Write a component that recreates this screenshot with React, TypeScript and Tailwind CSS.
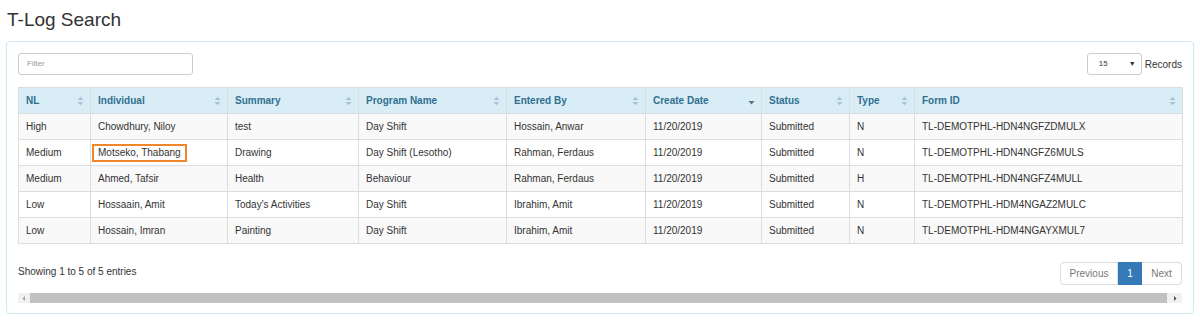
import { FC } from "react";

type Row = {
  nl: string;
  individual: string;
  summary: string;
  program: string;
  enteredBy: string;
  createDate: string;
  status: string;
  type: string;
  formId: string;
  flagged?: boolean;
};

const rows: Row[] = [
  { nl: "High", individual: "Chowdhury, Niloy", summary: "test", program: "Day Shift", enteredBy: "Hossain, Anwar", createDate: "11/20/2019", status: "Submitted", type: "N", formId: "TL-DEMOTPHL-HDN4NGFZDMULX" },
  { nl: "Medium", individual: "Motseko, Thabang", summary: "Drawing", program: "Day Shift (Lesotho)", enteredBy: "Rahman, Ferdaus", createDate: "11/20/2019", status: "Submitted", type: "N", formId: "TL-DEMOTPHL-HDN4NGFZ6MULS", flagged: true },
  { nl: "Medium", individual: "Ahmed, Tafsir", summary: "Health", program: "Behaviour", enteredBy: "Rahman, Ferdaus", createDate: "11/20/2019", status: "Submitted", type: "H", formId: "TL-DEMOTPHL-HDN4NGFZ4MULL" },
  { nl: "Low", individual: "Hossaain, Amit", summary: "Today's Activities", program: "Day Shift", enteredBy: "Ibrahim, Amit", createDate: "11/20/2019", status: "Submitted", type: "N", formId: "TL-DEMOTPHL-HDM4NGAZ2MULC" },
  { nl: "Low", individual: "Hossain, Imran", summary: "Painting", program: "Day Shift", enteredBy: "Ibrahim, Amit", createDate: "11/20/2019", status: "Submitted", type: "N", formId: "TL-DEMOTPHL-HDM4NGAYXMUL7" },
];

const columns = [
  { label: "NL", width: "w-[72px]" },
  { label: "Individual", width: "w-[137px]" },
  { label: "Summary", width: "w-[131px]" },
  { label: "Program Name", width: "w-[148px]" },
  { label: "Entered By", width: "w-[139px]" },
  { label: "Create Date", width: "w-[116px]", sorted: true },
  { label: "Status", width: "w-[88px]" },
  { label: "Type", width: "w-[65px]" },
  { label: "Form ID", width: "w-[268px]" },
];

const SortIcon: FC<{ sorted?: boolean }> = ({ sorted }) =>
  sorted ? (
    <svg width="7" height="10" viewBox="0 0 7 10">
      <path d="M0.5 5 L6.5 5 L3.5 8.5 Z" fill="#4f7590" />
    </svg>
  ) : (
    <svg width="7" height="10" viewBox="0 0 7 10">
      <path d="M0.5 4 L6.5 4 L3.5 0.8 Z" fill="#a9c2d2" />
      <path d="M0.5 6 L6.5 6 L3.5 9.2 Z" fill="#a9c2d2" />
    </svg>
  );

const cell = "h-[26px] border border-[#dddddd] pl-[7px] pr-[6px] align-middle whitespace-nowrap";

export default function App() {
  return (
    <div className="w-[1200px] h-[320px] bg-white text-[#333] font-['Liberation_Sans',Arial,sans-serif]">
      <div className="pl-[7px] pt-[10px] text-[19px] leading-[19px] text-[#333]">T-Log Search</div>

      <div className="mx-[6px] mt-[12px] rounded-[4px] border border-[#cce8f0] px-[11px] pt-[11px] pb-[10px]">
        <div className="flex items-center justify-between">
          <div className="flex h-[22px] w-[175px] items-center rounded-[3px] border border-[#cccccc] pl-[8px] text-[8px] text-[#999]">
            Filter
          </div>
          <div className="flex items-center gap-[3px]">
            <div className="flex h-[22px] w-[55px] items-center justify-between rounded-[3px] border border-[#cccccc] pl-[11px] pr-[5px] text-[8px] text-[#333]">
              <span>15</span>
              <span className="text-[7px]">▼</span>
            </div>
            <span className="text-[10px]">Records</span>
          </div>
        </div>

        <table className="mt-[12px] w-[1164px] table-fixed border-collapse text-[10px]">
          <thead>
            <tr className="bg-[#d9edf7]">
              {columns.map((c) => (
                <th key={c.label} className={`${c.width} ${cell} text-left font-bold text-[#31708f]`}>
                  <div className="flex items-center justify-between">
                    <span>{c.label}</span>
                    <SortIcon sorted={c.sorted} />
                  </div>
                </th>
              ))}
            </tr>
          </thead>
          <tbody>
            {rows.map((r, i) => (
              <tr key={r.formId} className={i % 2 === 0 ? "bg-[#f9f9f9]" : "bg-white"}>
                <td className={cell}>{r.nl}</td>
                <td className={cell}>
                  {r.flagged ? (
                    <span className="-ml-[6px] inline-block border-2 border-[#f0862a] px-[4px] leading-[14px]">
                      {r.individual}
                    </span>
                  ) : (
                    r.individual
                  )}
                </td>
                <td className={cell}>{r.summary}</td>
                <td className={cell}>{r.program}</td>
                <td className={cell}>{r.enteredBy}</td>
                <td className={cell}>{r.createDate}</td>
                <td className={cell}>{r.status}</td>
                <td className={cell}>{r.type}</td>
                <td className={cell}>{r.formId}</td>
              </tr>
            ))}
          </tbody>
        </table>

        <div className="mt-[18px] flex items-start justify-between">
          <div className="pt-[4px] text-[10px] leading-[12px]">Showing 1 to 5 of 5 entries</div>
          <div className="flex h-[23px] text-[10px]">
            <div className="flex w-[58px] items-center justify-center rounded-l-[4px] border border-[#dddddd] text-[#777]">
              Previous
            </div>
            <div className="flex w-[24px] items-center justify-center border border-[#337ab7] bg-[#337ab7] text-white">
              1
            </div>
            <div className="flex w-[40px] items-center justify-center rounded-r-[4px] border border-l-0 border-[#dddddd] text-[#777]">
              Next
            </div>
          </div>
        </div>

        <div className="mt-[8px] flex h-[10px] w-[1164px] bg-[#f1f1f1]">
          <div className="flex w-[12px] items-center justify-center">
            <svg width="4" height="5" viewBox="0 0 4 5">
              <path d="M3 0 L3 5 L0.5 2.5 Z" fill="#a3a3a3" />
            </svg>
          </div>
          <div className="flex-1 bg-[#c1c1c1]" />
          <div className="flex w-[15px] items-center justify-center">
            <svg width="4" height="5" viewBox="0 0 4 5">
              <path d="M1 0 L1 5 L3.5 2.5 Z" fill="#505050" />
            </svg>
          </div>
        </div>
      </div>
    </div>
  );
}
